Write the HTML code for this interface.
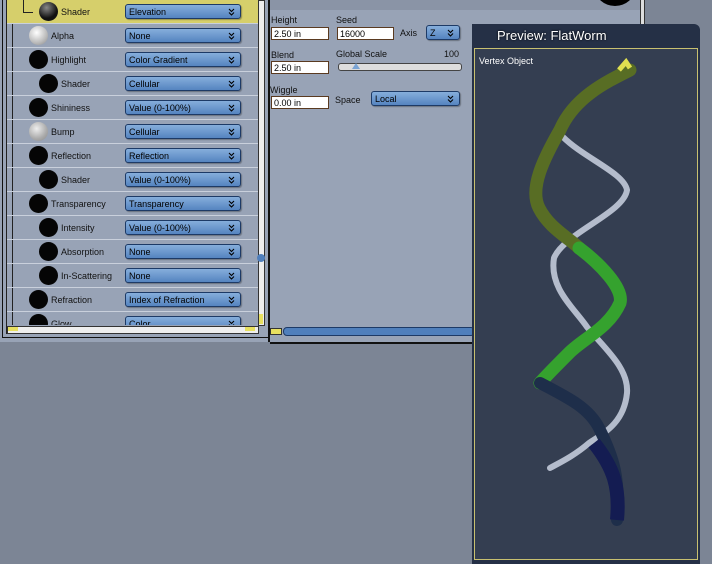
<!DOCTYPE html>
<html><head><style>
body{margin:0;width:712px;height:554px;overflow:hidden;background:#7c8595;font-family:"Liberation Sans",sans-serif;position:relative}
.a{position:absolute}
.lp{left:0;top:0;width:268px;height:342px;background:#98a3b6;border-right:2px solid #111}
.row{position:absolute;left:7px;width:251px;height:23px;border-bottom:1px solid #c9d0dc}
.row span{position:absolute;font-size:9px;color:#111;top:7px}
.ball{position:absolute;width:19px;height:19px;border-radius:50%;background:#050505;top:2px}
.dd{position:absolute;left:118px;top:4px;border:1px solid #1d3a66;border-radius:3px;background:linear-gradient(#86aedb,#5584c0);font-size:9px;color:#000;line-height:14px;padding-left:3px;box-sizing:border-box;width:116px;height:15px;box-shadow:1px 1px 1px rgba(0,0,0,.3)}
.dd:after{content:"";position:absolute;right:6px;top:3px;width:6px;height:7px;background:url("#");}
.dd svg{position:absolute;right:5px;top:3px}
.inp{position:absolute;background:#fff;border:1px solid #5a3a20;height:13px;font-size:9px;line-height:13px;padding-left:2px;box-sizing:border-box}
.lbl{position:absolute;font-size:9px;color:#111}
</style></head><body>
<div class="a lp">
<div class="a" style="left:2px;top:0;width:1px;height:338px;background:#111"></div>
<div class="a" style="left:2px;top:337px;width:266px;height:1px;background:#111"></div>
<div class="a" style="left:6px;top:0;width:1px;height:334px;background:#222"></div>
<div class="a" style="left:12px;top:0;width:1px;height:325px;background:#222"></div>
<div class="row" style="top:0;background:#d6cf6b"><div class="a" style="left:16px;top:0;width:1px;height:12px;background:#222"></div><div class="a" style="left:16px;top:12px;width:10px;height:1px;background:#222"></div><div class="ball" style="left:32px;background:radial-gradient(circle at 40% 30%,#888,#111 60%)"></div><span style="left:54px">Shader</span><div class="dd">Elevation</div></div>
<div class="row" style="top:24px"><div class="ball" style="left:22px;background:radial-gradient(circle at 40% 35%,#fff,#bbb 60%,#888)"></div><span style="left:44px">Alpha</span><div class="dd">None</div></div>
<div class="row" style="top:48px"><div class="ball" style="left:22px"></div><span style="left:44px">Highlight</span><div class="dd">Color Gradient</div></div>
<div class="row" style="top:72px"><div class="ball" style="left:32px"></div><span style="left:54px">Shader</span><div class="dd">Cellular</div></div>
<div class="row" style="top:96px"><div class="ball" style="left:22px"></div><span style="left:44px">Shininess</span><div class="dd">Value (0-100%)</div></div>
<div class="row" style="top:120px"><div class="ball" style="left:22px;background:radial-gradient(circle at 40% 35%,#eee,#aaa 60%,#888)"></div><span style="left:44px">Bump</span><div class="dd">Cellular</div></div>
<div class="row" style="top:144px"><div class="ball" style="left:22px"></div><span style="left:44px">Reflection</span><div class="dd">Reflection</div></div>
<div class="row" style="top:168px"><div class="ball" style="left:32px"></div><span style="left:54px">Shader</span><div class="dd">Value (0-100%)</div></div>
<div class="row" style="top:192px"><div class="ball" style="left:22px"></div><span style="left:44px">Transparency</span><div class="dd">Transparency</div></div>
<div class="row" style="top:216px"><div class="ball" style="left:32px"></div><span style="left:54px">Intensity</span><div class="dd">Value (0-100%)</div></div>
<div class="row" style="top:240px"><div class="ball" style="left:32px"></div><span style="left:54px">Absorption</span><div class="dd">None</div></div>
<div class="row" style="top:264px"><div class="ball" style="left:32px"></div><span style="left:54px">In-Scattering</span><div class="dd">None</div></div>
<div class="row" style="top:288px"><div class="ball" style="left:22px"></div><span style="left:44px">Refraction</span><div class="dd">Index of Refraction</div></div>
<div class="row" style="top:312px;height:13px;overflow:hidden;border:0"><div class="ball" style="left:22px"></div><span style="left:44px">Glow</span><div class="dd">Color</div></div>
<div class="a" style="left:7px;top:326px;width:250px;height:6px;background:#eee;border:1px solid #333"></div>
<div class="a" style="left:8px;top:327px;width:10px;height:4px;background:#e8e060"></div>
<div class="a" style="left:245px;top:327px;width:10px;height:4px;background:#e8e060"></div>
<div class="a" style="left:258px;top:0;width:5px;height:324px;background:#eee;border:1px solid #333"></div>
<div class="a" style="left:257px;top:254px;width:8px;height:8px;border-radius:4px;background:#4f7fbc"></div>
<div class="a" style="left:259px;top:314px;width:4px;height:10px;background:#e8e060"></div>
</div>
<div class="a" style="left:270px;top:0;width:370px;height:342px;background:#98a3b6;border-bottom:2px solid #111"></div>
<div class="a" style="left:270px;top:0;width:370px;height:10px;background:#8a94a6"></div>
<div class="a" style="left:595px;top:-30px;width:40px;height:36px;border-radius:50%;background:#000"></div>
<div class="a" style="left:640px;top:0;width:3px;height:342px;background:#ddd;border-left:1px solid #333;border-right:1px solid #333"></div>
<div class="lbl" style="left:271px;top:15px">Height</div>
<div class="inp" style="left:271px;top:27px;width:58px">2.50 in</div>
<div class="lbl" style="left:336px;top:15px">Seed</div>
<div class="inp" style="left:337px;top:27px;width:57px">16000</div>
<div class="lbl" style="left:400px;top:28px">Axis</div>
<div class="dd a" style="left:426px;top:25px;width:34px;height:15px">Z</div>
<div class="lbl" style="left:271px;top:50px">Blend</div>
<div class="inp" style="left:271px;top:61px;width:58px">2.50 in</div>
<div class="lbl" style="left:336px;top:49px">Global Scale</div>
<div class="lbl" style="left:444px;top:49px">100</div>
<div class="a" style="left:338px;top:63px;width:122px;height:6px;border-radius:3px;background:#ddd;border:1px solid #444"></div>
<div class="a" style="left:352px;top:63px;width:0;height:0;border-left:4px solid transparent;border-right:4px solid transparent;border-bottom:6px solid #7aa4d4"></div>
<div class="lbl" style="left:270px;top:85px">Wiggle</div>
<div class="inp" style="left:271px;top:96px;width:58px">0.00 in</div>
<div class="lbl" style="left:335px;top:95px">Space</div>
<div class="dd a" style="left:371px;top:91px;width:89px;height:15px">Local</div>
<div class="a" style="left:270px;top:328px;width:10px;height:5px;background:#e8e060;border:1px solid #333"></div>
<div class="a" style="left:283px;top:327px;width:190px;height:7px;border-radius:4px;background:#4f7fbc;border:1px solid #1d3a66"></div>
<div class="a" style="left:472px;top:24px;width:228px;height:540px;background:#253046;border-radius:0 6px 0 0"></div>
<div class="a" style="left:497px;top:28px;font-size:13px;color:#fff;text-shadow:0 0 2px #000">Preview: FlatWorm</div>
<div class="a" style="left:474px;top:48px;width:222px;height:510px;background:#343e51;border:1px solid #c8c070"></div>
<div class="a" style="left:479px;top:56px;font-size:9px;color:#fff">Vertex Object</div>
<svg class="a" style="left:474px;top:48px" width="224" height="506">
<path d="M89 89 C110 110 150 125 153 142 C150 165 90 185 80 210 C75 240 100 260 113 279 C130 300 155 320 153 345 C150 375 130 385 115 395 C100 408 85 415 76 420" stroke="#b4bccc" stroke-width="6" fill="none" stroke-linecap="round"/>
<path d="M156 22 C130 35 100 50 86 82 C70 110 55 140 65 160 C75 180 95 190 105 200" stroke="#586d24" stroke-width="13" fill="none" stroke-linecap="round"/>
<path d="M105 200 C125 215 150 240 146 255 C135 280 110 290 95 305 C80 320 70 330 66 335" stroke="#35a22e" stroke-width="13" fill="none" stroke-linecap="round"/>
<path d="M66 335 C95 350 115 360 125 380 C140 410 146 430 143 472" stroke="#1e2e4a" stroke-width="12" fill="none" stroke-linecap="round"/>
<path d="M120 395 C140 420 146 440 143 472" stroke="#141c52" stroke-width="14" fill="none"/>
<path d="M145 22 L152 14 L156 20" stroke="#e0e050" stroke-width="5" fill="none"/>
</svg>
<style>.dd::after{display:none}</style>
<svg width="0" height="0" style="position:absolute"></svg>
<script>document.querySelectorAll('.dd').forEach(function(d){d.insertAdjacentHTML('beforeend','<svg width="7" height="8"><path d="M1 1 L3.5 3.5 L6 1 M1 4.5 L3.5 7 L6 4.5" stroke="#000" stroke-width="1.1" fill="none"/></svg>')});</script>
</body></html>
